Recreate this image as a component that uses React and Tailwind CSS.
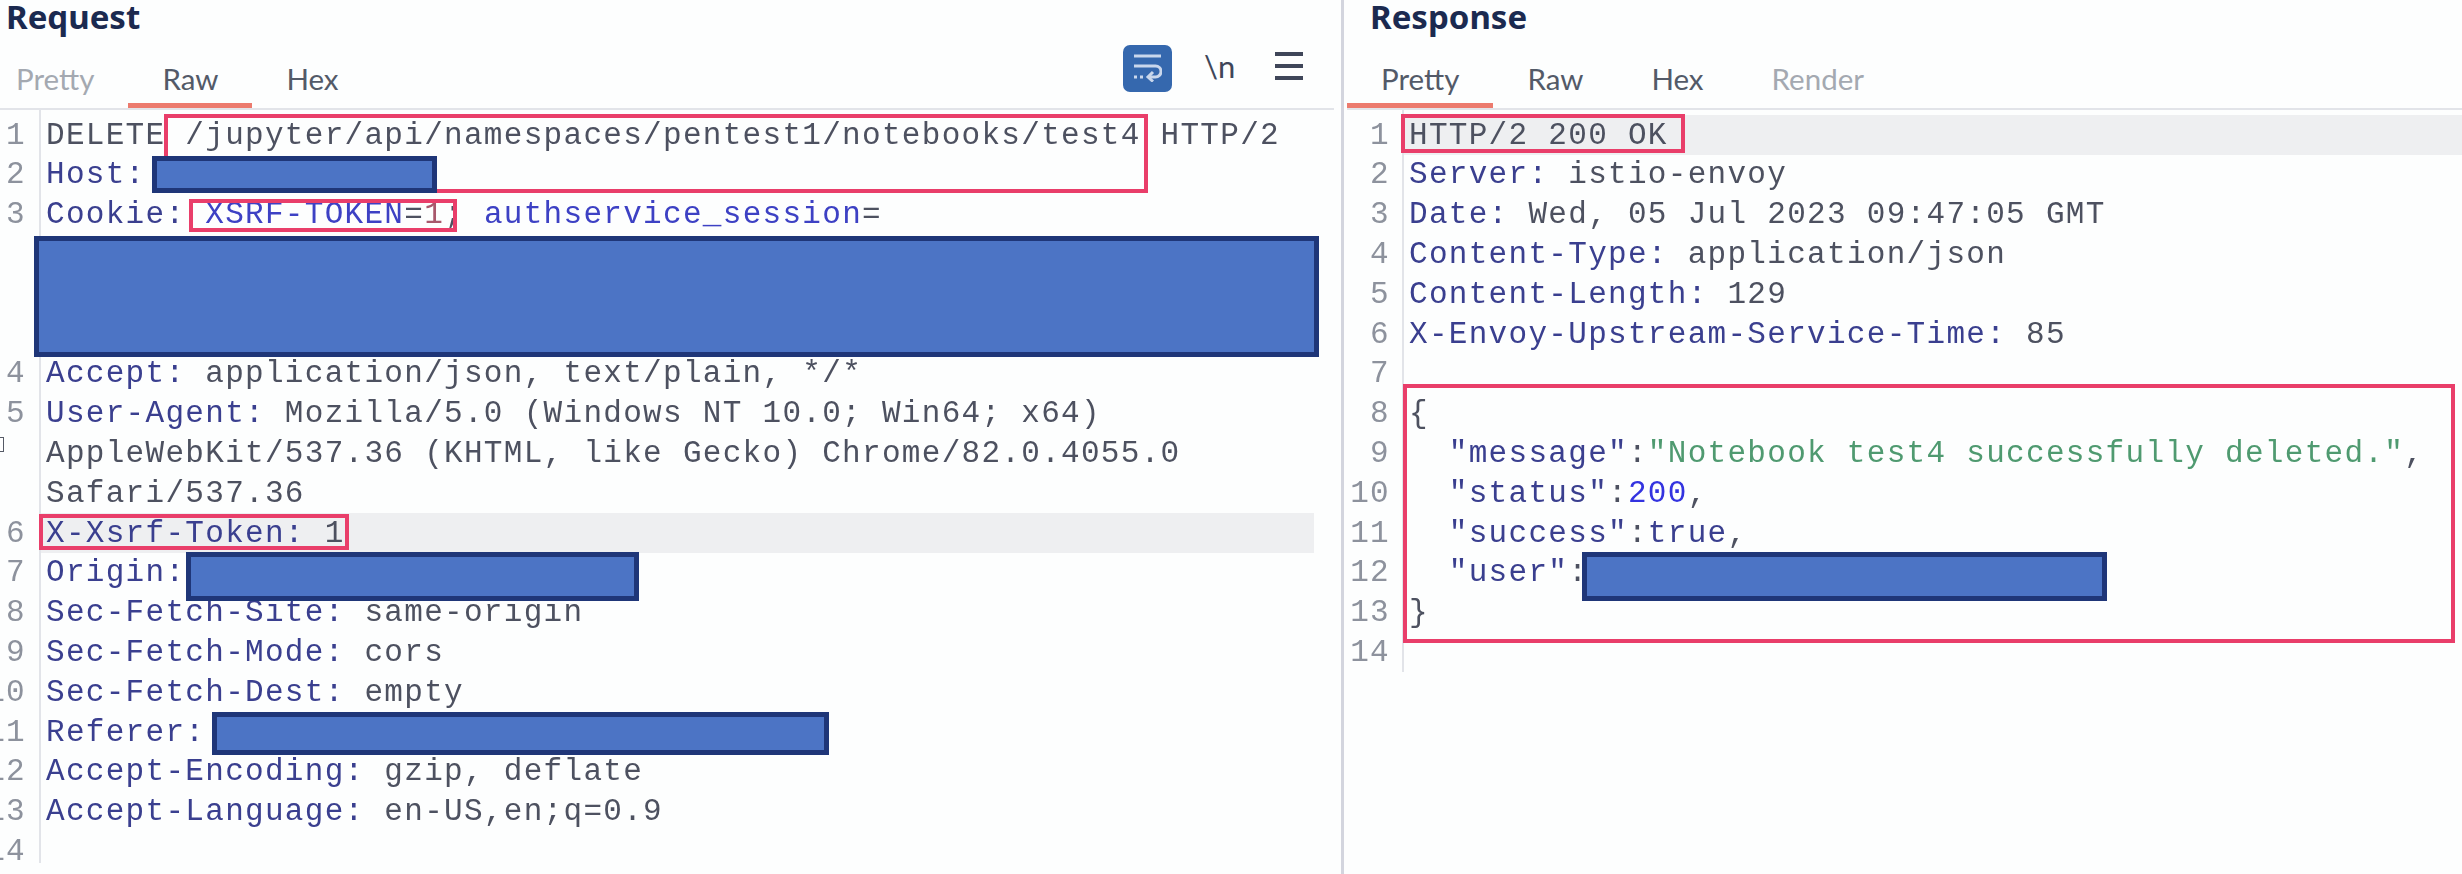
import React from 'react';

const NAVY = 'text-[#3a3f8f]';
const GREY = 'text-[#4d5160]';
const BLUE = 'text-[#3d41c4]';
const GREEN = 'text-[#4f9a70]';

// each row: [line number, [[text, colour], ...], selected]
const requestRows = [
  ['1', [['DELETE /jupyter/api/namespaces/pentest1/notebooks/test4 HTTP/2', GREY]]],
  ['2', [['Host:', NAVY]]],
  ['3', [['Cookie: ', NAVY], ['XSRF-TOKEN', BLUE], ['=', GREY], ['1', 'text-[#a8586c]'], ['; ', GREY], ['authservice_session', BLUE], ['=', GREY]]],
  ['', []],
  ['', []],
  ['', []],
  ['4', [['Accept:', NAVY], [' application/json, text/plain, */*', GREY]]],
  ['5', [['User-Agent:', NAVY], [' Mozilla/5.0 (Windows NT 10.0; Win64; x64)', GREY]]],
  ['', [['AppleWebKit/537.36 (KHTML, like Gecko) Chrome/82.0.4055.0', GREY]]],
  ['', [['Safari/537.36', GREY]]],
  ['6', [['X-Xsrf-Token:', NAVY], [' 1', GREY]], true],
  ['7', [['Origin:', NAVY]]],
  ['8', [['Sec-Fetch-Site:', NAVY], [' same-origin', GREY]]],
  ['9', [['Sec-Fetch-Mode:', NAVY], [' cors', GREY]]],
  ['10', [['Sec-Fetch-Dest:', NAVY], [' empty', GREY]]],
  ['11', [['Referer:', NAVY]]],
  ['12', [['Accept-Encoding:', NAVY], [' gzip, deflate', GREY]]],
  ['13', [['Accept-Language:', NAVY], [' en-US,en;q=0.9', GREY]]],
  ['14', []],
];

const responseRows = [
  ['1', [['HTTP/2 200 OK', GREY]], true],
  ['2', [['Server:', NAVY], [' istio-envoy', GREY]]],
  ['3', [['Date:', NAVY], [' Wed, 05 Jul 2023 09:47:05 GMT', GREY]]],
  ['4', [['Content-Type:', NAVY], [' application/json', GREY]]],
  ['5', [['Content-Length:', NAVY], [' 129', GREY]]],
  ['6', [['X-Envoy-Upstream-Service-Time:', NAVY], [' 85', GREY]]],
  ['7', []],
  ['8', [['{', GREY]]],
  ['9', [['  "message"', NAVY], [':', GREY], ['"Notebook test4 successfully deleted."', GREEN], [',', GREY]]],
  ['10', [['  "status"', NAVY], [':', GREY], ['200', 'text-[#3333e0]'], [',', GREY]]],
  ['11', [['  "success"', NAVY], [':', GREY], ['true', NAVY], [',', GREY]]],
  ['12', [['  "user"', NAVY], [':', GREY]]],
  ['13', [['}', GREY]]],
  ['14', []],
];

const WrapIcon = () => (
  <svg width="29" height="28" viewBox="0 0 29 28" fill="none" stroke="#c9d7ec" strokeWidth="3">
    <path d="M1 2h27" />
    <path d="M1 12h21.5a5.5 5.5 0 0 1 0 11H15" />
    <path d="M20 18l-5 5 5 4.500" />
    <path d="M1 23h3M7 23h3" />
  </svg>
);

const Tab = ({ label, active, dim }) => (
  <div
    className={`h-full px-[34px] pt-[14px] flex items-center border-b-[5px] text-[29.500px] leading-none ${
      active ? 'border-[#ec7b6e]' : 'border-transparent'
    } ${dim ? 'text-[#a4a9b1]' : 'text-[#535a68]'}`}
  >
    {label}
  </div>
);

const Row = ({ num, parts, selected, gutter, numPad, rowEnd }) => (
  <div className="flex h-[39.800px] shrink-0">
    <div className={`${gutter} ${numPad} shrink-0 flex justify-end items-center border-r-2 border-[#e2e4e9] text-[#8d929d]`}>
      {num}
    </div>
    <div className={`${rowEnd} flex-1 pl-[5px] flex items-center whitespace-pre ${selected ? 'bg-[#eeeff1]' : ''}`}>
      {parts.map(([text, color], i) => (
        <span key={i} className={color}>{text}</span>
      ))}
    </div>
  </div>
);

const Panel = ({ title, tabs, rows, width, titlePad, tabsClass, gutter, numPad, rowEnd, toolbar }) => (
  <div className={`${width} shrink-0 h-full flex flex-col overflow-hidden`}>
    <h2 className={`${titlePad} h-[33px] mb-[7px] flex items-center font-['Noto_Sans',sans-serif] font-bold text-[33px] leading-none text-[#1b2a50]`}>{title}</h2>
    <div className={`${tabsClass} h-[70px] flex border-b-2 border-[#e2e4e9]`}>
      {tabs.map((t) => (
        <Tab key={t.label} {...t} />
      ))}
      {toolbar}
    </div>
    <div className="h-[753px] overflow-hidden flex flex-col font-['Liberation_Mono',monospace] text-[31px] tracking-[1.3px] leading-none blur-[0.6px]">
      <div className="flex h-[5.300px] shrink-0">
        <div className={`${gutter} shrink-0 border-r-2 border-[#e2e4e9]`} />
      </div>
      {rows.map(([num, parts, selected], i) => (
        <Row key={i} num={num} parts={parts} selected={selected} gutter={gutter} numPad={numPad} rowEnd={rowEnd} />
      ))}
    </div>
  </div>
);

const App = () => {
  const toolbar = (
    <div className="ml-auto pr-[31px] flex items-center gap-[32px]">
      <div className="w-[49px] h-[47px] mb-[12px] rounded-[7px] bg-[#3568ae] flex items-center justify-center">
        <WrapIcon />
      </div>
      <div className="flex items-center gap-[42px] mb-[16px]">
        <span className="w-[29px] text-[31px] leading-none text-[#3f4659]">\n</span>
        <div className="w-[28px] flex flex-col gap-[8px]">
          <div className="h-[4px] bg-[#3f4659]" />
          <div className="h-[4px] bg-[#3f4659]" />
          <div className="h-[4px] bg-[#3f4659]" />
        </div>
      </div>
    </div>
  );

  return (
    <div className="relative w-[2462px] h-[874px] overflow-hidden flex bg-[#fdfefe] font-['Lato',sans-serif]">
      <Panel
        title="Request"
        width="w-[1341px]"
        titlePad="pl-[6px]"
        tabsClass="-ml-[18px] mr-[7px]"
        gutter="w-[41px]"
        numPad="pr-[13px]"
        rowEnd="mr-[27px]"
        rows={requestRows}
        toolbar={toolbar}
        tabs={[{ label: 'Pretty', dim: true }, { label: 'Raw', active: true }, { label: 'Hex' }]}
      />
      <div className="w-[3px] shrink-0 h-full bg-[#d3d5de]" />
      <Panel
        title="Response"
        width="flex-1"
        titlePad="pl-[26px]"
        tabsClass="ml-[3px]"
        gutter="w-[60px]"
        numPad="pr-[12px]"
        rowEnd=""
        rows={responseRows}
        tabs={[{ label: 'Pretty', active: true }, { label: 'Raw' }, { label: 'Hex' }, { label: 'Render', dim: true }]}
      />

      {/* red annotation boxes */}
      <div className="absolute left-[164px] top-[114px] w-[984px] h-[79px] border-[4px] border-[#e93e6a]" />
      <div className="absolute left-[189px] top-[199px] w-[268px] h-[33px] border-[4px] border-[#e93e6a]" />
      <div className="absolute left-[39px] top-[514px] w-[310px] h-[36px] border-[4px] border-[#e93e6a]" />
      <div className="absolute left-[1401px] top-[114px] w-[284px] h-[39px] border-[4px] border-[#e93e6a]" />
      <div className="absolute left-[1403px] top-[384px] w-[1052px] h-[259px] border-[4px] border-[#e93e6a]" />

      {/* blue redactions */}
      <div className="absolute left-[152px] top-[156px] w-[285px] h-[37px] border-[5px] border-[#1f3678] bg-[#4c74c5]" />
      <div className="absolute left-[34px] top-[236px] w-[1285px] h-[121px] border-[5px] border-[#1f3678] bg-[#4c74c5]" />
      <div className="absolute left-[186px] top-[552px] w-[453px] h-[49px] border-[5px] border-[#1f3678] bg-[#4c74c5]" />
      <div className="absolute left-[212px] top-[712px] w-[617px] h-[43px] border-[5px] border-[#1f3678] bg-[#4c74c5]" />
      <div className="absolute left-[1582px] top-[552px] w-[525px] h-[49px] border-[5px] border-[#1f3678] bg-[#4c74c5]" />

      {/* stray edge of a box cut by the crop */}
      <div className="absolute -left-[6px] top-[437px] w-[10px] h-[15px] border border-[#555a66] bg-white" />
    </div>
  );
};

export default App;
